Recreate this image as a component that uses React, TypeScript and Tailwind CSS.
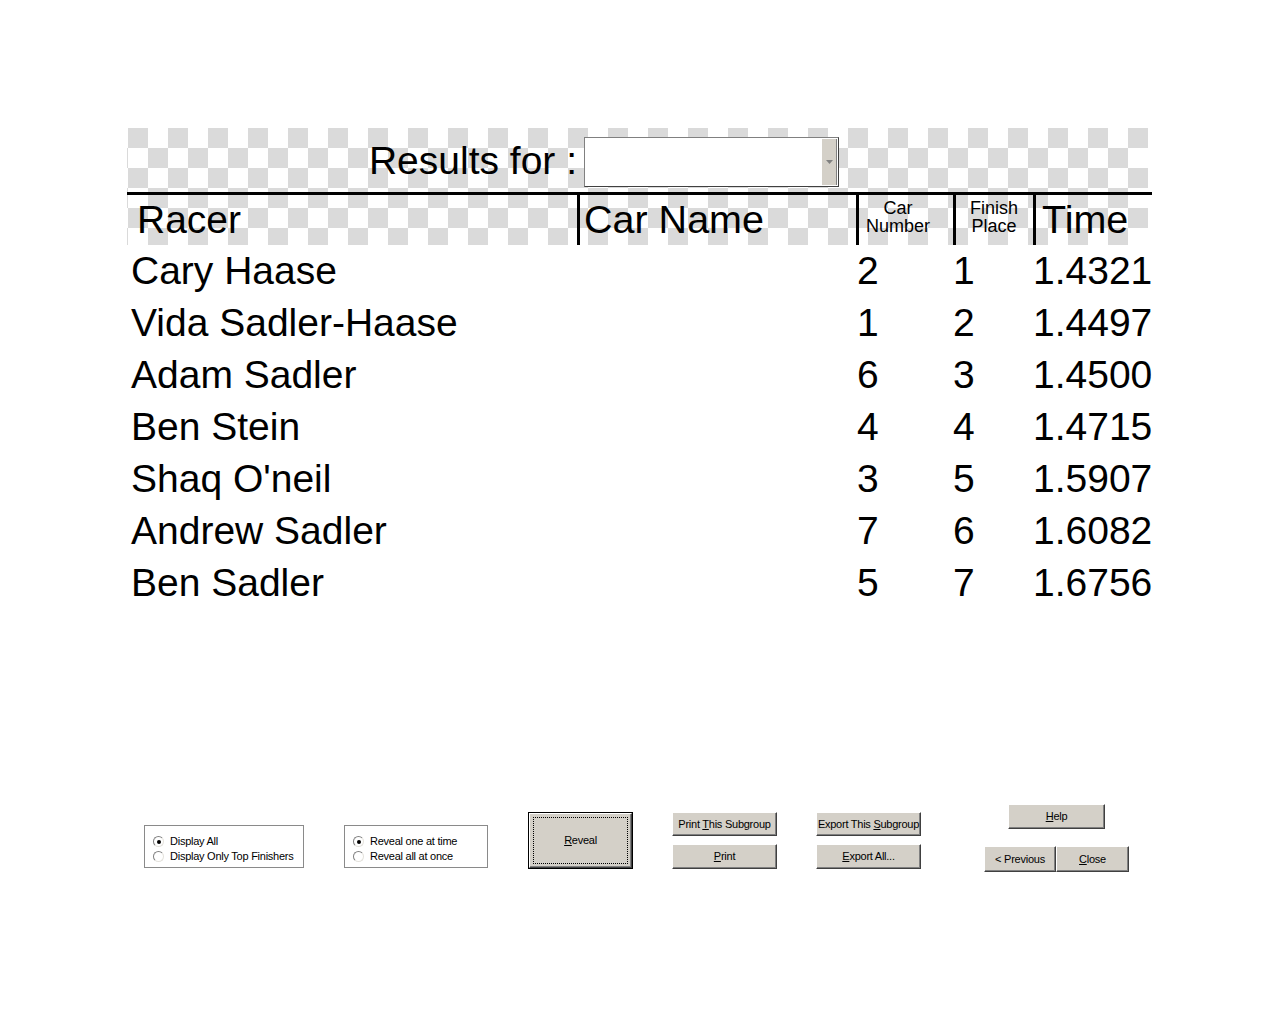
import React from 'react'

const results = [
  { name: 'Cary Haase', car: 2, place: 1, time: '1.4321' },
  { name: 'Vida Sadler-Haase', car: 1, place: 2, time: '1.4497' },
  { name: 'Adam Sadler', car: 6, place: 3, time: '1.4500' },
  { name: 'Ben Stein', car: 4, place: 4, time: '1.4715' },
  { name: "Shaq O'neil", car: 3, place: 5, time: '1.5907' },
  { name: 'Andrew Sadler', car: 7, place: 6, time: '1.6082' },
  { name: 'Ben Sadler', car: 5, place: 7, time: '1.6756' },
]

const btn =
  'flex items-center justify-center bg-[#d4d0c8] border border-t-white border-l-white border-r-[#404040] border-b-[#404040] shadow-[inset_-1px_-1px_0_#808080] text-[11px] tracking-[-0.25px] text-black leading-none whitespace-pre'

function Key({ children }: { children: React.ReactNode }) {
  return <span className="underline underline-offset-[1px]">{children}</span>
}

function Radio({ checked, label }: { checked?: boolean; label: string }) {
  return (
    <div className="flex items-center h-[15px]">
      <span className="w-[11px] h-[11px] rounded-full bg-white border border-t-[#808080] border-l-[#808080] border-r-[#e4e2dc] border-b-[#e4e2dc] flex items-center justify-center shrink-0">
        {checked && <span className="w-[4px] h-[4px] rounded-full bg-black" />}
      </span>
      <span className="ml-[6px] text-[11px] tracking-[-0.25px] leading-none whitespace-nowrap">{label}</span>
    </div>
  )
}

export default function App() {
  return (
    <div className="w-[1280px] h-[1024px] bg-white text-black font-['Liberation_Sans',Arial,sans-serif] overflow-hidden">
      <div className="ml-[127px] mt-[128px] w-[1025px]">
        <div className="bg-[conic-gradient(white_25%,#dadada_0_50%,white_0_75%,#dadada_0)] bg-[length:40px_40px] bg-[position:1px_0] mr-[4px]">
          {/* title row */}
          <div className="h-[64px] flex items-start pt-[9px]">
            <div className="w-[450px] text-right text-[39px] leading-[44px] mt-[2px]">Results for :</div>
            <div className="ml-[7px] w-[255px] h-[50px] bg-white border border-t-[#808080] border-l-[#808080] border-r-[#404040] border-b-[#404040] flex justify-end p-[1px]">
              <div className="w-[16px] h-full bg-[#d4d0c8] border-l border-white shadow-[inset_-1px_0_0_#808080] flex items-center justify-center">
                <svg width="7" height="4" viewBox="0 0 7 4"><path d="M0 0h7L3.5 4z" fill="#808080" /></svg>
              </div>
            </div>
          </div>
          <div className="h-[3px] bg-black -mr-[4px]" />
          {/* column headers */}
          <div className="h-[50px] flex">
            <div className="w-[450px] pl-[10px] text-[39px] leading-[49px]">Racer</div>
            <div className="w-[279px] border-l-[3px] border-black pl-[4px] text-[39.5px] leading-[49px]">Car Name</div>
            <div className="w-[97px] border-l-[3px] border-black pl-[1px] pt-[4px]">
              <div className="w-[76px] text-center text-[18px] leading-[18px]">Car<br />Number</div>
            </div>
            <div className="w-[80px] border-l-[3px] border-black pt-[4px]">
              <div className="w-[76px] text-center text-[18px] leading-[18px]">Finish<br />Place</div>
            </div>
            <div className="flex-1 border-l-[3px] border-black pl-[6px] text-[39.5px] leading-[49px]">Time</div>
          </div>
        </div>
        {/* result rows */}
        <div className="pl-[4px]">
          {results.map(r => (
            <div key={r.name} className="grid grid-cols-[726px_96px_80px_1fr] text-[39px] leading-[52px] whitespace-nowrap">
              <div>{r.name}</div>
              <div>{r.car}</div>
              <div>{r.place}</div>
              <div>{r.time}</div>
            </div>
          ))}
        </div>
      </div>

      {/* bottom controls */}
      <div className="ml-[144px] mt-[195px] flex items-start">
        <div className="mt-[21px] w-[160px] h-[43px] border border-[#8a8a8a] pl-[8px] pt-[8px]">
          <Radio checked label="Display All" />
          <Radio label="Display Only Top Finishers" />
        </div>
        <div className="ml-[40px] mt-[21px] w-[144px] h-[43px] border border-[#8a8a8a] pl-[8px] pt-[8px]">
          <Radio checked label="Reveal one at time" />
          <Radio label="Reveal all at once" />
        </div>
        <div className="ml-[40px] mt-[8px] w-[105px] h-[57px] border border-black">
          <div className={`${btn} w-full h-full p-[3px]`}>
            <div className="w-full h-full border border-dotted border-black flex items-center justify-center">
              <span><Key>R</Key>eveal</span>
            </div>
          </div>
        </div>
        <div className="ml-[39px] mt-[8px] w-[105px] flex flex-col gap-[8px]">
          <div className={`${btn} h-[24px]`}><span>Print <Key>T</Key>his Subgroup</span></div>
          <div className={`${btn} h-[25px]`}><span><Key>P</Key>rint</span></div>
        </div>
        <div className="ml-[39px] mt-[8px] w-[105px] flex flex-col gap-[8px]">
          <div className={`${btn} h-[24px]`}><span>Export This <Key>S</Key>ubgroup</span></div>
          <div className={`${btn} h-[25px]`}><span><Key>E</Key>xport All...</span></div>
        </div>
        <div className="ml-[63px] flex flex-col">
          <div className={`${btn} ml-[24px] w-[97px] h-[25px]`}><span><Key>H</Key>elp</span></div>
          <div className="mt-[17px] flex">
            <div className={`${btn} w-[72px] h-[26px]`}><span>&lt; Previous</span></div>
            <div className={`${btn} w-[73px] h-[26px]`}><span><Key>C</Key>lose</span></div>
          </div>
        </div>
      </div>
    </div>
  )
}
